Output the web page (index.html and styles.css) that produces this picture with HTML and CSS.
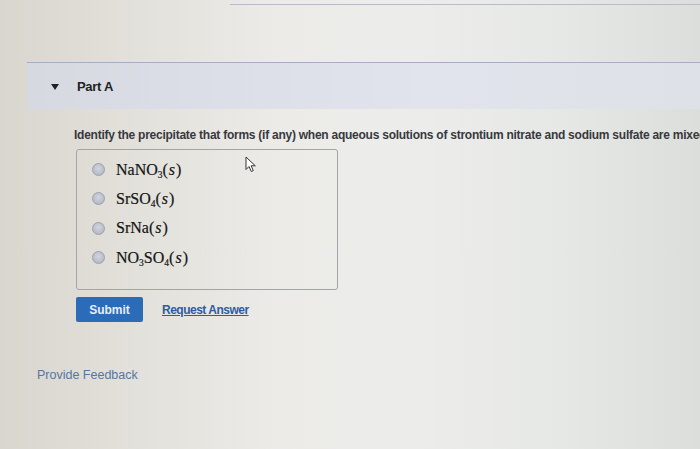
FILE: index.html
```
<!DOCTYPE html>
<html>
<head>
<meta charset="utf-8">
<link rel="stylesheet" href="styles.css">
</head>
<body>
<div class="screen">
  <div class="topline"></div>
  <div class="part-header">
    <span class="caret"></span>
    <span class="part-title">Part A</span>
  </div>
  <p class="question">Identify the precipitate that forms (if any) when aqueous solutions of strontium nitrate and sodium sulfate are mixed.</p>
  <div class="options">
    <div class="option"><span class="radio"></span><span class="chem">NaNO<sub>3</sub>(<i>s</i>)</span></div>
    <div class="option"><span class="radio"></span><span class="chem">SrSO<sub>4</sub>(<i>s</i>)</span></div>
    <div class="option"><span class="radio"></span><span class="chem">SrNa(<i>s</i>)</span></div>
    <div class="option"><span class="radio"></span><span class="chem">NO<sub>3</sub>SO<sub>4</sub>(<i>s</i>)</span></div>
    <svg class="cursor" width="12" height="17" viewBox="0 0 12 17"><path d="M1 1 L1 13.5 L4 10.5 L6.3 15.5 L8.3 14.6 L6.1 9.8 L10.3 9.8 Z" fill="#fff" stroke="#333" stroke-width="1" stroke-linejoin="round"/></svg>
  </div>
  <div class="actions">
    <button class="submit">Submit</button>
    <a class="request">Request Answer</a>
  </div>
  <a class="feedback">Provide Feedback</a>
</div>
</body>
</html>
```
FILE: styles.css
```
html, body {
  margin: 0;
  padding: 0;
}
body {
  width: 700px;
  height: 449px;
  overflow: hidden;
  font-family: "Liberation Sans", Arial, sans-serif;
  background: linear-gradient(90deg, #d9d6ce 0%, #e3e1db 20%, #ecebe8 40%, #ecedeb 60%, #e6e8e6 80%, #dcdedb 100%);
}
.screen {
  position: relative;
  height: 449px;
}
.topline {
  margin-left: 230px;
  height: 4px;
  border-bottom: 1px solid #b9bcc6;
}
.part-header {
  margin-top: 57px;
  margin-left: 27px;
  height: 46px;
  border-top: 1px solid #a9adc0;
  background: linear-gradient(90deg, #d6d9e0 0%, #dcdfe7 30%, #e2e4ed 60%, #dfe1e8 100%);
  display: flex;
  align-items: center;
  padding-left: 24px;
  gap: 18px;
}
.caret {
  width: 0;
  height: 0;
  border-left: 4.5px solid transparent;
  border-right: 4.5px solid transparent;
  border-top: 6px solid #222;
  margin-top: 1px;
}
.part-title {
  font-weight: bold;
  font-size: 13px;
  color: #222;
  letter-spacing: -0.3px;
}
.question {
  margin: 19px 0 0 74px;
  font-size: 12px;
  font-weight: bold;
  color: #38383e;
  white-space: nowrap;
  overflow: hidden;
  letter-spacing: -0.25px;
  line-height: 14px;
}
.options {
  position: relative;
  margin: 7px 0 0 76px;
  width: 260px;
  height: 134px;
  border: 1px solid #a2a4ac;
  border-radius: 3px;
  padding-top: 5px;
  box-sizing: content-box;
}
.option {
  display: flex;
  align-items: center;
  height: 29.3px;
  padding-left: 15px;
  gap: 11px;
}
.radio {
  width: 11px;
  height: 11px;
  border-radius: 50%;
  background: radial-gradient(circle at 50% 40%, #d2d5de 0%, #b8bcc8 70%, #a6aab6 100%);
  border: 1px solid #9ca0ae;
}
.chem {
  font-family: "Liberation Serif", "Times New Roman", serif;
  font-size: 16px;
  color: #151515;
  -webkit-text-stroke: 0.2px #151515;
}
.chem sub {
  font-size: 9.5px;
  vertical-align: -3px;
  line-height: 0;
}
.chem i {
  padding: 0 1px;
}
.cursor {
  position: absolute;
  left: 168px;
  top: 6px;
}
.actions {
  display: flex;
  align-items: center;
  margin: 7px 0 0 76px;
  gap: 19px;
}
.submit {
  width: 67px;
  height: 25px;
  background: #2b6cb8;
  border: none;
  border-radius: 2px;
  color: #e9eef6;
  font-family: "Liberation Sans", Arial, sans-serif;
  font-weight: bold;
  font-size: 12px;
  padding: 0;
}
.request {
  color: #2d5ba6;
  font-weight: bold;
  font-size: 12px;
  text-decoration: underline;
  letter-spacing: -0.5px;
}
.feedback {
  display: block;
  margin: 46px 0 0 37px;
  color: #5676a0;
  font-size: 12.5px;
}
```
